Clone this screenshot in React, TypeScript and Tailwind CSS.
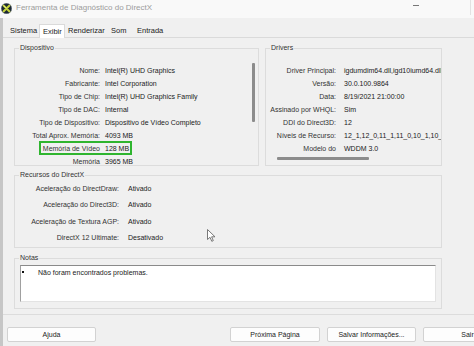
import React from "react";

const font = { fontFamily: '"Liberation Sans", Arial, sans-serif' };

function Row({ label, value, labelW, gap, h, children }: { label: string; value: string; labelW: string; gap: string; h: string; children?: React.ReactNode }) {
  return (
    <div className={`relative flex items-center whitespace-nowrap ${h}`}>
      <div className={`${labelW} shrink-0 text-right text-[#333]`}>{label}</div>
      <div className={`${gap} text-[#1a1a1a]`}>{value}</div>
      {children}
    </div>
  );
}

function DxIcon() {
  return (
    <svg width="11" height="11" viewBox="0 0 22 22">
      <circle cx="11" cy="11" r="10.5" fill="#1c2733" />
      <path d="M5 5 L17 17 M17 5 L5 17" stroke="#c5d43c" strokeWidth="4" strokeLinecap="round" />
      <path d="M6 6 L10 10" stroke="#f4f7c0" strokeWidth="1.2" strokeLinecap="round" />
      <circle cx="11" cy="11" r="10.5" fill="none" stroke="#6b7680" strokeWidth="1" />
    </svg>
  );
}

export default function App() {
  return (
    <div className="relative w-[474px] h-[346px] overflow-hidden bg-[#f0f0f0] flex flex-col text-[7px] leading-none" style={font}>
      {/* title bar */}
      <div className="h-[18px] shrink-0 bg-[#f9f9f9] flex items-center relative">
        <div className="ml-[1px] mt-[-2px]"><DxIcon /></div>
        <div className="ml-[4px] mt-[-3px] text-[8px] text-[#9c9c9c]">Ferramenta de Diagnóstico do DirectX</div>
        <div className="ml-auto mr-[55px] mt-[-8px] w-[6px] h-[1px] bg-[#777]" />
        <div className="absolute left-[470px] top-0 h-[15px] w-[10px] border-l border-[#e2e2e2]" />
      </div>

      <div className="flex-1 flex flex-col border-l-[3px] border-[#c6c6c6]">
        {/* tabs */}
        <div className="h-[20px] shrink-0 flex items-end border-b border-[#dadada] pl-[4px] text-[7.5px] text-[#222]">
          <div className="w-[32px] h-[13px] pl-[3px] flex items-center">Sistema</div>
          <div className="w-[26px] h-[14px] pl-[3px] flex items-center bg-white border-t border-x border-[#dadada] mb-[-1px]">Exibir</div>
          <div className="w-[43px] h-[13px] pl-[3px] flex items-center">Renderizar</div>
          <div className="w-[26px] h-[13px] pl-[3px] flex items-center">Som</div>
          <div className="w-[40px] h-[13px] pl-[3px] flex items-center">Entrada</div>
        </div>

        {/* tab page */}
        <div className="h-[277px] shrink-0 border-b border-[#dcdcdc] pl-[11px] pt-[5px] flex flex-col">
          <div className="flex gap-[6px]">
            {/* Dispositivo */}
            <fieldset className="w-[245px] h-[123px] border border-[#dcdcdc] min-w-0">
              <legend className="ml-[4px] px-[1px] h-[10px] leading-[10px] text-[#333]">Dispositivo</legend>
              <div className="h-[112px] overflow-hidden flex">
                <div className="flex-1 pt-[11px]">
                  <Row label="Nome:" value="Intel(R) UHD Graphics" labelW="w-[85px]" gap="ml-[5px]" h="h-[13px]" />
                  <Row label="Fabricante:" value="Intel Corporation" labelW="w-[85px]" gap="ml-[5px]" h="h-[13px]" />
                  <Row label="Tipo de Chip:" value="Intel(R) UHD Graphics Family" labelW="w-[85px]" gap="ml-[5px]" h="h-[13px]" />
                  <Row label="Tipo de DAC:" value="Internal" labelW="w-[85px]" gap="ml-[5px]" h="h-[13px]" />
                  <Row label="Tipo de Dispositivo:" value="Dispositivo de Vídeo Completo" labelW="w-[85px]" gap="ml-[5px]" h="h-[13px]" />
                  <Row label="Total Aprox. Memória:" value="4093 MB" labelW="w-[85px]" gap="ml-[5px]" h="h-[13px]" />
                  <Row label="Memória de Vídeo" value="128 MB" labelW="w-[85px]" gap="ml-[5px]" h="h-[13px]">
                    <div className="absolute left-[24px] top-[-1px] w-[93px] h-[14px] border-2 border-[#2fb52f]" />
                  </Row>
                  <Row label="Memória" value="3965 MB" labelW="w-[85px]" gap="ml-[5px]" h="h-[13px]" />
                </div>
                <div className="w-[3px] mr-[3px] pt-[10px]">
                  <div className="h-[59px] w-[3px] bg-[#8c8c8c] rounded-[1px]" />
                </div>
              </div>
            </fieldset>

            {/* Drivers */}
            <fieldset className="w-[177px] h-[123px] border border-[#dcdcdc] min-w-0">
              <legend className="ml-[4px] px-[1px] h-[10px] leading-[10px] text-[#333]">Drivers</legend>
              <div className="h-[112px] overflow-hidden pt-[11px]">
                <Row label="Driver Principal:" value="igdumdim64.dll,igd10iumd64.dll,igd10iumd64.dll" labelW="w-[70px]" gap="ml-[8px]" h="h-[13px]" />
                <Row label="Versão:" value="30.0.100.9864" labelW="w-[70px]" gap="ml-[8px]" h="h-[13px]" />
                <Row label="Data:" value="8/19/2021 21:00:00" labelW="w-[70px]" gap="ml-[8px]" h="h-[13px]" />
                <Row label="Assinado por WHQL:" value="Sim" labelW="w-[70px]" gap="ml-[8px]" h="h-[13px]" />
                <Row label="DDI do Direct3D:" value="12" labelW="w-[70px]" gap="ml-[8px]" h="h-[13px]" />
                <Row label="Níveis de Recurso:" value="12_1,12_0,11_1,11_0,10_1,10_0,9_3" labelW="w-[70px]" gap="ml-[8px]" h="h-[13px]" />
                <Row label="Modelo do" value="WDDM 3.0" labelW="w-[70px]" gap="ml-[8px]" h="h-[13px]" />
                <div className="ml-[11px] mt-[2px] w-[92px] h-[3px] bg-[#8c8c8c] rounded-[1px]" />
              </div>
            </fieldset>
          </div>

          {/* Recursos */}
          <fieldset className="mt-[4px] w-[428px] h-[78px] border border-[#dcdcdc] min-w-0">
            <legend className="ml-[4px] px-[1px] h-[10px] leading-[10px] text-[#333]">Recursos do DirectX</legend>
            <div>
              <Row label="Aceleração do DirectDraw:" value="Ativado" labelW="w-[104px]" gap="ml-[9px]" h="h-[16.5px]" />
              <Row label="Aceleração do Direct3D:" value="Ativado" labelW="w-[104px]" gap="ml-[9px]" h="h-[16.5px]" />
              <Row label="Aceleração de Textura AGP:" value="Ativado" labelW="w-[104px]" gap="ml-[9px]" h="h-[16.5px]" />
              <Row label="DirectX 12 Ultimate:" value="Desativado" labelW="w-[104px]" gap="ml-[9px]" h="h-[16.5px]" />
            </div>
          </fieldset>

          {/* Notas */}
          <fieldset className="mt-[5px] w-[428px] h-[56px] border border-[#dcdcdc] min-w-0">
            <legend className="ml-[4px] px-[1px] h-[10px] leading-[10px] text-[#333]">Notas</legend>
            <div className="mx-[5px] mt-[2px] h-[37px] bg-white border border-[#e3e3e3] border-t-[#8a8a8a] border-l-[#a0a0a0] flex items-start pt-[3px]">
              <div className="w-[2px] h-[2px] bg-[#111] ml-[1px] mt-[2px]" />
              <div className="ml-[14px] text-[#1a1a1a]">Não foram encontrados problemas.</div>
            </div>
          </fieldset>
        </div>

        {/* buttons */}
        <div className="flex items-start pt-[12px] text-[#222]">
          <div className="ml-[4px] w-[89px] h-[15px] shrink-0 bg-[#fdfdfd] border border-[#d2d2d2] rounded-[2px] flex items-center justify-center">Ajuda</div>
          <div className="ml-[134px] w-[90px] h-[15px] shrink-0 bg-[#fdfdfd] border border-[#d2d2d2] rounded-[2px] flex items-center justify-center">Próxima Página</div>
          <div className="ml-[7px] w-[89px] h-[15px] shrink-0 bg-[#fdfdfd] border border-[#d2d2d2] rounded-[2px] flex items-center justify-center">Salvar Informações...</div>
          <div className="ml-[7px] w-[89px] h-[15px] shrink-0 bg-[#fdfdfd] border border-[#d2d2d2] rounded-[2px] flex items-center justify-center">Sair</div>
        </div>
      </div>

      {/* mouse cursor */}
      <svg className="absolute left-[207px] top-[229px]" width="9" height="13" viewBox="0 0 9 13">
        <path d="M0.5 0.5 L0.5 10.5 L3 8.3 L4.8 12.3 L6.3 11.6 L4.6 7.8 L8 7.8 Z" fill="#fff" stroke="#6a6a6a" strokeWidth="0.9" strokeLinejoin="round" />
      </svg>
    </div>
  );
}
